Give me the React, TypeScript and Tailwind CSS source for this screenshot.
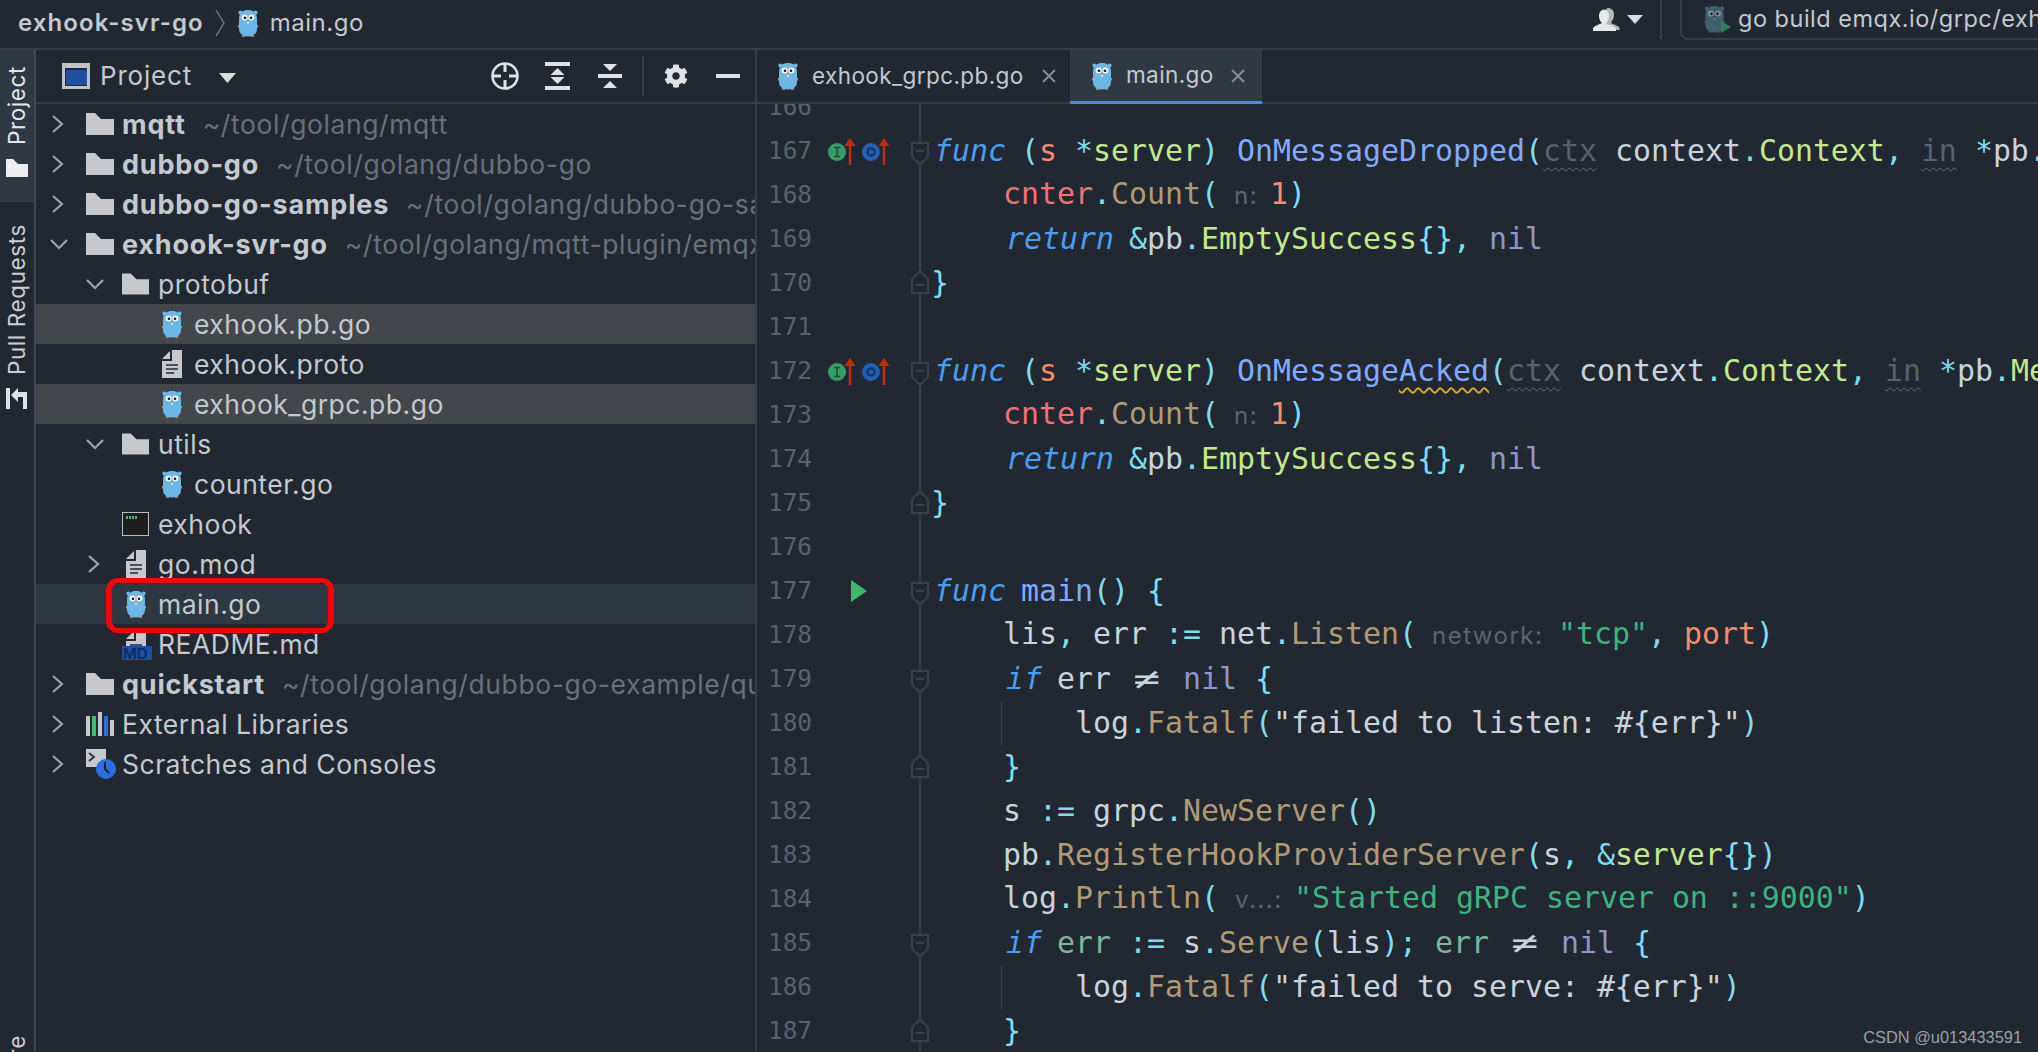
import { FaCog } from "react-icons/fa";

type Tok = [string, string?];

const kw = "text-[#4a9df0] italic pl-[3px] -mr-[3px]";
const cy = "text-[#7fdbee]";
const gr = "text-[#c3e88d]";
const fn = "text-[#82aaff]";
const tx = "text-[#c9d3de]";
const tan = "text-[#b09a76]";
const or = "text-[#f78c6c]";
const red = "text-[#f07178]";
const nil = "text-[#8f96c9]";
const str = "text-[#3fb27f]";
const errg = "text-[#80b59c]";
const neq = "text-[#c9d3de] inline-block w-[2ch] text-center scale-x-150";
const dimW = "text-[#566270] underline decoration-wavy decoration-[#5f6a76] decoration-1 underline-offset-[6px]";
const ackW = "text-[#82aaff] underline decoration-wavy decoration-[#e0a92e] decoration-[1.5px] underline-offset-[6px]";

const sp: Tok = [" "];
const i4: Tok = ["    "];
const i8: Tok = ["        "];

// hints are drawn in the ui font, widths taken from the screenshot
const hints: Record<string, string> = {
  "n:": "w-[51px] pl-[15px]",
  "network:": "w-[141px] pl-[15px]",
  "v...:": "w-[75px] pl-[16px]",
};

const receiver: Tok[] = [["func", kw], sp, ["(", cy], ["s", or], sp, ["*", cy], ["server", gr], [")", cy], sp];
const params: Tok[] = [["(", cy], ["ctx", dimW], sp, ["context", tx], [".", cy], ["Context", gr], [",", cy], sp, ["in", dimW], sp, ["*", cy], ["pb", tx], [".", cy]];
const count: Tok[] = [i4, ["cnter", red], [".", cy], ["Count", tan], ["(", cy], ["n:", "hint"], ["1", or], [")", cy]];
const ret: Tok[] = [i4, ["return", kw], sp, ["&", cy], ["pb", tx], [".", cy], ["EmptySuccess", gr], ["{}", cy], [",", cy], sp, ["nil", nil]];

const lines: { n: number; fold?: "down" | "up"; mark?: "impl" | "run"; code: Tok[] }[] = [
  { n: 166, code: [] },
  { n: 167, fold: "down", mark: "impl", code: [...receiver, ["OnMessageDropped", fn], ...params] },
  { n: 168, code: count },
  { n: 169, code: ret },
  { n: 170, fold: "up", code: [["}", cy]] },
  { n: 171, code: [] },
  { n: 172, fold: "down", mark: "impl", code: [...receiver, ["OnMessage", fn], ["Acked", ackW], ...params, ["Me", gr]] },
  { n: 173, code: count },
  { n: 174, code: ret },
  { n: 175, fold: "up", code: [["}", cy]] },
  { n: 176, code: [] },
  { n: 177, fold: "down", mark: "run", code: [["func", kw], sp, ["main", fn], ["()", cy], sp, ["{", cy]] },
  { n: 178, code: [i4, ["lis", tx], [",", cy], sp, ["err", tx], sp, [":=", cy], sp, ["net", tx], [".", cy], ["Listen", tan], ["(", cy], ["network:", "hint"], ['"tcp"', str], [",", cy], sp, ["port", or], [")", cy]] },
  { n: 179, fold: "down", code: [i4, ["if", kw], sp, ["err", tx], sp, ["≠", neq], sp, ["nil", nil], sp, ["{", cy]] },
  { n: 180, code: [i8, ["log", tx], [".", cy], ["Fatalf", tan], ["(", cy], ['"failed to listen: #{err}"', tx], [")", cy]] },
  { n: 181, fold: "up", code: [i4, ["}", cy]] },
  { n: 182, code: [i4, ["s", tx], sp, [":=", cy], sp, ["grpc", tx], [".", cy], ["NewServer", tan], ["()", cy]] },
  { n: 183, code: [i4, ["pb", tx], [".", cy], ["RegisterHookProviderServer", tan], ["(", cy], ["s", tx], [",", cy], sp, ["&", cy], ["server", gr], ["{}", cy], [")", cy]] },
  { n: 184, code: [i4, ["log", tx], [".", cy], ["Println", tan], ["(", cy], ["v...:", "hint"], ['"Started gRPC server on ::9000"', str], [")", cy]] },
  { n: 185, fold: "down", code: [i4, ["if", kw], sp, ["err", errg], sp, [":=", cy], sp, ["s", tx], [".", cy], ["Serve", tan], ["(", cy], ["lis", tx], [")", cy], [";", cy], sp, ["err", errg], sp, ["≠", neq], sp, ["nil", nil], sp, ["{", cy]] },
  { n: 186, code: [i8, ["log", tx], [".", cy], ["Fatalf", tan], ["(", cy], ['"failed to serve: #{err}"', tx], [")", cy]] },
  { n: 187, fold: "up", code: [i4, ["}", cy]] },
];

function Gopher({ className = "", dim = false }: { className?: string; dim?: boolean }) {
  const body = dim ? "#41606f" : "#6cb6e6";
  const limb = dim ? "#34495a" : "#a98f7a";
  const eye = dim ? "#7d8d99" : "#ffffff";
  return (
    <svg viewBox="0 0 20 28" className={className}>
      <rect x="-0.5" y="16" width="3" height="2.5" rx="1" fill={limb} />
      <rect x="17.5" y="16" width="3" height="2.5" rx="1" fill={limb} />
      <ellipse cx="5.5" cy="27" rx="2" ry="1" fill={limb} />
      <ellipse cx="14.5" cy="27" rx="2" ry="1" fill={limb} />
      <circle cx="2.4" cy="3.6" r="2" fill={body} />
      <circle cx="17.6" cy="3.6" r="2" fill={body} />
      <path d="M1 10C1 3.5 5 1 10 1s9 2.5 9 9v10c0 4.5-3.5 7.5-9 7.5S1 24.500 1 20Z" fill={body} />
      <circle cx="6.600" cy="8.500" r="3" fill={eye} />
      <circle cx="13.400" cy="8.500" r="3" fill={eye} />
      <circle cx="7" cy="8.800" r="1.400" fill="#1b2230" />
      <circle cx="13" cy="8.800" r="1.400" fill="#1b2230" />
      <ellipse cx="10" cy="12" rx="1.500" ry="1" fill={limb} />
      <rect x="9.200" y="12.800" width="1.600" height="1.800" fill={eye} />
    </svg>
  );
}

function Folder({ className = "" }: { className?: string }) {
  return (
    <svg viewBox="0 0 28 22" className={className}>
      <path d="M0 0H9L15 6H28V22H0Z" fill="#c6c8cd" />
    </svg>
  );
}

function FileIcon({ className = "" }: { className?: string }) {
  return (
    <svg viewBox="0 0 20 28" className={className}>
      <path d="M0 9 8 1V9Z" fill="#c6c8cd" />
      <path d="M10 0H20V28H0V11H10Z" fill="#c6c8cd" />
      <rect x="4" y="14" width="12" height="2" fill="#4b5059" />
      <rect x="4" y="18" width="12" height="2" fill="#4b5059" />
      <rect x="4" y="22" width="8" height="2" fill="#4b5059" />
    </svg>
  );
}

function Terminal() {
  return (
    <svg viewBox="0 0 27 24" className="h-[24px] w-[27px]">
      <rect x="0.500" y="0.500" width="26" height="23" fill="#1d1d1d" stroke="#b9bdc2" />
      <rect x="4" y="4" width="2" height="3" fill="#46b866" />
      <rect x="7" y="4" width="2" height="3" fill="#46b866" />
      <rect x="10" y="4" width="2" height="3" fill="#46b866" />
      <rect x="13" y="4" width="2" height="3" fill="#46b866" />
    </svg>
  );
}

function Libraries() {
  return (
    <svg viewBox="0 0 28 24" className="h-[24px] w-[28px]">
      <rect x="0" y="4" width="4" height="20" fill="#c6c8cd" />
      <rect x="6" y="4" width="4" height="20" fill="#3fbf6e" />
      <rect x="12" y="0" width="4" height="24" fill="#c6c8cd" />
      <rect x="18" y="4" width="4" height="20" fill="#2a6fdb" />
      <rect x="24" y="8" width="4" height="16" fill="#c6c8cd" />
    </svg>
  );
}

function Scratches() {
  return (
    <svg viewBox="0 0 30 30" className="h-[30px] w-[30px]">
      <rect x="0" y="0" width="20" height="18" fill="#c6c8cd" />
      <path d="M3 4l5 4-5 4" fill="none" stroke="#2a313a" strokeWidth="1.800" />
      <circle cx="20" cy="20" r="10" fill="#2a6fdb" />
      <path d="M19 13v7l4 4" fill="none" stroke="#1c2733" strokeWidth="2" />
    </svg>
  );
}

function ReadmeIcon() {
  return (
    <div className="relative h-[40px] w-[30px]">
      <FileIcon className="absolute left-[4px] top-[6px] h-[28px] w-[20px]" />
      <div className="absolute left-0 top-[22px] flex h-[14px] w-[30px] items-center bg-[#1c4fa1] pl-[1px] text-[15px] font-semibold leading-none text-[#0e2c60]">
        MD
      </div>
    </div>
  );
}

function Chevron({ open }: { open?: boolean }) {
  if (open) {
    return (
      <svg viewBox="0 0 18 11" className="h-[11px] w-[18px]">
        <path d="M1 1l8 8 8-8" fill="none" stroke="#a0a4a9" strokeWidth="2.200" />
      </svg>
    );
  }
  return (
    <svg viewBox="0 0 12 18" className="ml-[2px] h-[18px] w-[12px]">
      <path d="M1 1l9 8-9 8" fill="none" stroke="#a0a4a9" strokeWidth="2.200" />
    </svg>
  );
}

const goIcon = <Gopher className="ml-[4px] h-[28px] w-[20px]" />;
const fileIcon = <FileIcon className="ml-[4px] h-[28px] w-[20px]" />;
const folder0 = <Folder className="h-[22px] w-[28px]" />;
const folder1 = <Folder className="h-[22px] w-[27px]" />;

const rows: {
  depth: 0 | 1 | 2;
  arrow?: "open" | "closed";
  icon: React.ReactNode;
  name: string;
  bold?: boolean;
  path?: string;
  bg?: string;
}[] = [
  { depth: 0, arrow: "closed", icon: folder0, name: "mqtt", bold: true, path: "~/tool/golang/mqtt" },
  { depth: 0, arrow: "closed", icon: folder0, name: "dubbo-go", bold: true, path: "~/tool/golang/dubbo-go" },
  { depth: 0, arrow: "closed", icon: folder0, name: "dubbo-go-samples", bold: true, path: "~/tool/golang/dubbo-go-samples" },
  { depth: 0, arrow: "open", icon: folder0, name: "exhook-svr-go", bold: true, path: "~/tool/golang/mqtt-plugin/emqx-extension" },
  { depth: 1, arrow: "open", icon: folder1, name: "protobuf" },
  { depth: 2, icon: goIcon, name: "exhook.pb.go", bg: "bg-[#43474c]" },
  { depth: 2, icon: fileIcon, name: "exhook.proto" },
  { depth: 2, icon: goIcon, name: "exhook_grpc.pb.go", bg: "bg-[#43474c]" },
  { depth: 1, arrow: "open", icon: folder1, name: "utils" },
  { depth: 2, icon: goIcon, name: "counter.go" },
  { depth: 1, icon: <Terminal />, name: "exhook" },
  { depth: 1, arrow: "closed", icon: fileIcon, name: "go.mod" },
  { depth: 1, icon: goIcon, name: "main.go", bg: "bg-[#2e3843]" },
  { depth: 1, icon: <ReadmeIcon />, name: "README.md" },
  { depth: 0, arrow: "closed", icon: folder0, name: "quickstart", bold: true, path: "~/tool/golang/dubbo-go-example/quickstart" },
  { depth: 0, arrow: "closed", icon: <Libraries />, name: "External Libraries" },
  { depth: 0, arrow: "closed", icon: <Scratches />, name: "Scratches and Consoles" },
];

const indent = ["pl-[14px]", "pl-[50px]", "pl-[86px]"];

function TreeRow({ row }: { row: (typeof rows)[number] }) {
  return (
    <div className={`flex h-[40px] items-center overflow-hidden whitespace-nowrap ${indent[row.depth]} ${row.bg ?? ""}`}>
      <div className="flex w-[36px] shrink-0 items-center">
        {row.arrow && <Chevron open={row.arrow === "open"} />}
      </div>
      <div className="flex h-[40px] w-[36px] shrink-0 items-center">{row.icon}</div>
      <span className={`leading-none text-[#c4c9cf] ${row.bold ? "text-[27px] font-bold tracking-[0.8px]" : "text-[26.500px] tracking-[0.5px]"}`}>{row.name}</span>
      {row.path && <span className="ml-[17px] text-[26.500px] leading-none tracking-[0.6px] text-[#66717d]">{row.path}</span>}
    </div>
  );
}

function FoldMark({ dir }: { dir: "down" | "up" }) {
  return (
    <svg viewBox="0 0 18 24" className={`absolute left-0 h-[24px] w-[18px] ${dir === "down" ? "top-[13px]" : "top-[9px]"}`}>
      <path
        d={dir === "down" ? "M1 1H17V15L9 23 1 15Z" : "M1 23H17V9L9 1 1 9Z"}
        fill="#212832"
        stroke="#38424d"
        strokeWidth="1.800"
      />
      <rect x="5" y={dir === "down" ? "8" : "14"} width="8" height="1.800" fill="#38424d" />
    </svg>
  );
}

function Marker({ type }: { type: "impl" | "run" }) {
  if (type === "run") {
    return (
      <svg viewBox="0 0 98 44" className="h-[44px] w-[98px]">
        <path d="M38 11 54 22 38 33Z" fill="#3fb86b" />
      </svg>
    );
  }
  return (
    <svg viewBox="0 0 98 44" className="h-[44px] w-[98px]">
      <circle cx="24" cy="23" r="9" fill="#379d68" />
      <path d="M21 18.500h6M24 18.500v9M21 27.500h6" stroke="#1a4f38" strokeWidth="1.600" fill="none" />
      <path d="M37 11v25" stroke="#c42b0c" strokeWidth="2.400" />
      <path d="M37 9 42.500 17H31.500Z" fill="#c42b0c" />
      <circle cx="58" cy="23" r="9" fill="#2160b3" />
      <circle cx="58" cy="23" r="3.600" fill="none" stroke="#122f66" strokeWidth="2.200" />
      <path d="M71 11v25" stroke="#c42b0c" strokeWidth="2.400" />
      <path d="M71 9 76.500 17H65.500Z" fill="#c42b0c" />
    </svg>
  );
}

function CodeLine({ line }: { line: (typeof lines)[number] }) {
  return (
    <div className="flex h-[44px] shrink-0 items-center">
      <span className="ml-[11px] w-[45px] shrink-0 font-['DejaVu_Sans_Mono'] text-[24.4px] leading-none text-[#58626e]">{line.n}</span>
      <div className="h-[44px] w-[98px] shrink-0">{line.mark && <Marker type={line.mark} />}</div>
      <div className="relative h-[44px] w-[18px] shrink-0">
        <div className="absolute inset-y-0 left-[8px] w-[2px] bg-[#343d48]" />
        {line.fold && <FoldMark dir={line.fold} />}
      </div>
      <div className="relative ml-[2px] whitespace-pre font-['DejaVu_Sans_Mono'] text-[29.900px] leading-[44px]">
        {(line.n === 180 || line.n === 186) && <div className="absolute left-[70px] top-0 h-[44px] w-px bg-[#38424d]" />}
        {line.code.map((tok, i) =>
          tok[1] === "hint" ? (
            <span key={i} className={`inline-block font-['Inter'] text-[24px] tracking-[1.500px] text-[#5b6570] ${hints[tok[0]]}`}>{tok[0]}</span>
          ) : (
            <span key={i} className={tok[1]}>{tok[0]}</span>
          ),
        )}
      </div>
    </div>
  );
}

function Tab({ name, active }: { name: string; active?: boolean }) {
  return (
    <div className={`flex h-[54px] items-center ${active ? "w-[192px] border-b-[3px] border-[#3d8fe6] bg-[#2f3843] pl-[22px]" : "w-[313px] border-b-2 border-[#343d48] pl-[21px]"}`}>
      <Gopher className="h-[28px] w-[20px] shrink-0" />
      <span className="ml-[14px] text-[22.500px] leading-none tracking-[0.4px] text-[#c4c9cf]">{name}</span>
      <svg viewBox="0 0 14 14" className={`h-[14px] w-[14px] shrink-0 ${active ? "ml-[17px]" : "ml-[18px]"}`}>
        <path d="M1 1l12 12M13 1 1 13" stroke="#8b9097" strokeWidth="1.800" />
      </svg>
    </div>
  );
}

export default function App() {
  return (
    <div className="relative flex h-screen w-screen flex-col overflow-hidden bg-[#212832] font-['Inter',sans-serif]">
      <div className="flex h-[50px] shrink-0 items-center border-b-2 border-[#343d48] pl-[18px] pb-[2px]">
        <span className="text-[24px] font-semibold leading-none tracking-[1.1px] text-[#c4c9cf]">exhook-svr-go</span>
        <svg viewBox="0 0 10 28" className="ml-[11px] h-[28px] w-[10px]">
          <path d="M1 1l8 13-8 13" fill="none" stroke="#7b8189" strokeWidth="1.300" />
        </svg>
        <Gopher className="ml-[13px] h-[28px] w-[20px]" />
        <span className="ml-[12px] text-[24px] leading-none tracking-[0.5px] text-[#c4c9cf]">main.go</span>
        <div className="ml-auto flex h-[48px] items-start">
          <div className="flex h-[40px] items-center">
            <svg viewBox="0 0 28 24" className="h-[24px] w-[28px]">
              <path d="M15 1c4 0 6 3 6 7 0 3-1 5-2.500 6.500v2c3 1 6 2 8 4v2.500H16l-1-5-2-2c-1-3-1-4-1-7 0-5 1-8 3-8Z" fill="#d9dbde" opacity="0.800" />
              <path d="M11 2.500c3 0 5 3 5 6.500 0 3-1 5-2.500 6.500v1.500c4 1 8 2.500 9.500 4.500v2.500H0V21c1.500-2 5.500-3.500 8.500-4.500V15.500C7 14 6 12 6 9c0-3.500 2-6.500 5-6.500Z" fill="#e6e8ea" />
            </svg>
            <svg viewBox="0 0 16 9" className="ml-[6px] h-[9px] w-[16px]">
              <path d="M0 0H16L8 9Z" fill="#d9dbde" />
            </svg>
          </div>
          <div className="ml-[17px] h-[40px] w-[2px] bg-[#343d48]" />
          <div className="ml-[18px] flex h-[41px] w-[358px] items-center overflow-hidden rounded-bl-[8px] border-b-2 border-l-2 border-[#343d48] pl-[22px]">
            <div className="relative h-[28px] w-[27px] shrink-0">
              <Gopher className="h-[28px] w-[21px]" dim />
              <svg viewBox="0 0 10 12" className="absolute bottom-0 right-0 h-[12px] w-[10px]">
                <path d="M0 0 10 6 0 12Z" fill="#2f7d5a" />
              </svg>
            </div>
            <span className="ml-[7px] whitespace-nowrap text-[23.500px] leading-none tracking-[0.5px] text-[#c4c9cf]">go build emqx.io/grpc/exhook</span>
          </div>
        </div>
      </div>

      <div className="flex min-h-0 flex-1">
        {/* tool window strip */}
        <div className="flex w-[36px] shrink-0 flex-col items-center overflow-hidden border-r-2 border-[#3d4855] text-[22.500px] leading-none tracking-[0.6px]">
          <div className="flex h-[152px] w-full shrink-0 flex-col items-center bg-[#2f3843] pt-[16px]">
            <span className="rotate-180 text-[#e4e7ea] [writing-mode:vertical-rl]">Project</span>
            <svg viewBox="0 0 22 18" className="mt-[14px] h-[18px] w-[22px]">
              <path d="M0 0H7L12 5H22V18H0Z" fill="#eceef0" />
            </svg>
          </div>
          <span className="mt-[22px] shrink-0 rotate-180 whitespace-nowrap text-[#c9ced4] [writing-mode:vertical-rl]">Pull Requests</span>
          <svg viewBox="0 0 22 21" className="mt-[13px] h-[21px] w-[22px] shrink-0">
            <path d="M0 0H4V21H0ZM5 7 12 0V4H21V21H17V9H12V14Z" fill="#dfe2e5" />
          </svg>
          <span className="mt-[626px] shrink-0 rotate-180 whitespace-nowrap text-[#c9ced4] [writing-mode:vertical-rl]">Structure</span>
        </div>

        {/* project tree */}
        <div className="flex w-[721px] shrink-0 flex-col border-r-2 border-[#343d48]">
          <div className="flex h-[54px] shrink-0 items-center border-b-2 border-[#343d48] pl-[26px]">
            <div className="flex h-[26px] w-[28px] items-center justify-center border-[3px] border-t-[5px] border-[#c0c3c8] bg-[#1f2a38]">
              <div className="h-[15px] w-[21px] bg-[#1f4f9e]" />
            </div>
            <span className="ml-[10px] text-[26px] leading-none tracking-[0.8px] text-[#c4c9cf]">Project</span>
            <svg viewBox="0 0 17 10" className="ml-[27px] mt-[3px] h-[10px] w-[17px]">
              <path d="M0 0H17L8.500 10Z" fill="#d9dbde" />
            </svg>
            <svg viewBox="0 0 28 28" className="ml-[255px] h-[28px] w-[28px]">
              <circle cx="14" cy="14" r="12.500" fill="none" stroke="#dfe1e5" strokeWidth="2.600" />
              <path d="M14 2v8M14 18v8M2 14h8M18 14h8" stroke="#dfe1e5" strokeWidth="3" />
            </svg>
            <svg viewBox="0 0 25 28" className="ml-[26px] h-[28px] w-[25px]">
              <path d="M0 0H25V4H0ZM0 24H25V28H0ZM12.500 6l7 7H5.500ZM5.500 15h14l-7 7Z" fill="#dfe1e5" />
            </svg>
            <svg viewBox="0 0 24 24" className="ml-[28px] h-[24px] w-[24px]">
              <path d="M5 0H19L12 7ZM0 10H24V14H0ZM12 17l7 7H5Z" fill="#dfe1e5" />
            </svg>
            <div className="ml-[20px] h-[40px] w-[2px] bg-[#343d48]" />
            <FaCog className="ml-[20px] h-[24px] w-[24px] text-[#dfe1e5]" />
            <div className="ml-[28px] h-[4px] w-[24px] bg-[#dfe1e5]" />
          </div>
          <div className="relative min-h-0 flex-1">
            {rows.map((row) => (
              <TreeRow key={row.name} row={row} />
            ))}
            <div className="absolute left-[70px] top-[474px] h-[55px] w-[228px] rounded-[12px] border-x-[6px] border-y-[5px] border-[#fb0006]" />
          </div>
        </div>

        {/* editor */}
        <div className="flex min-w-0 flex-1 flex-col overflow-hidden">
          <div className="flex h-[54px] shrink-0 border-b-2 border-[#343d48]">
            <Tab name="exhook_grpc.pb.go" />
            <Tab name="main.go" active />
          </div>
          <div className="min-h-0 flex-1 overflow-hidden">
            <div className="-mt-[19px] flex flex-col">
              {lines.map((line) => (
                <CodeLine key={line.n} line={line} />
              ))}
            </div>
          </div>
        </div>
      </div>

      <div className="absolute bottom-[7px] right-[16px] font-['Liberation_Sans'] text-[16.400px] leading-none text-[#9aa0a6]">
        CSDN @u013433591
      </div>
    </div>
  );
}
